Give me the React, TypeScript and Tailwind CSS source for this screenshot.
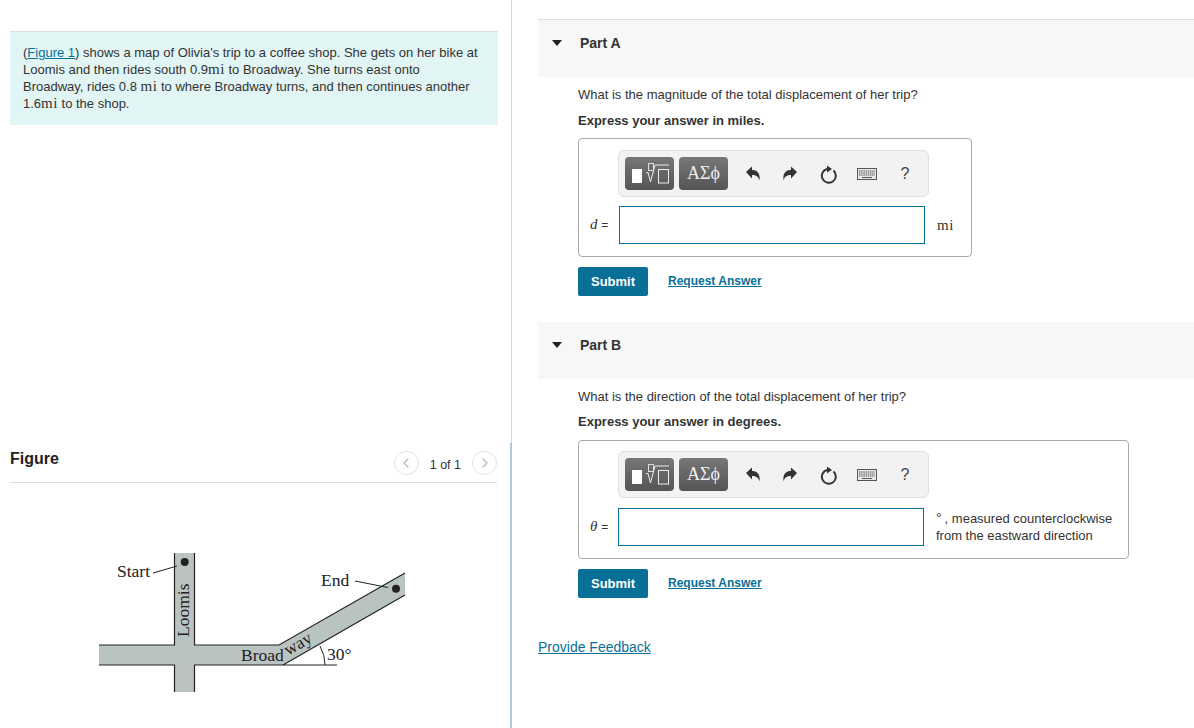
import React from "react";
import { ChevronLeft, ChevronRight } from "lucide-react";

const Mi = ({ children = "mi" }: { children?: React.ReactNode }) => (
  <span className="font-['Liberation_Serif',serif] text-[15px] tracking-[0.5px]">{children}</span>
);

const Templates = () => (
  <svg width="49" height="33" viewBox="0 0 49 33">
    <rect x="7" y="12" width="10" height="14" fill="#fff" />
    <rect x="23.500" y="6.500" width="5" height="7" fill="none" stroke="#ddd" />
    <path d="M21 16l2-.7 2.500 9.700 4.500-17h14" fill="none" stroke="#eee" strokeWidth="1" />
    <rect x="33.500" y="12.500" width="10" height="13.500" fill="none" stroke="#eee" />
  </svg>
);

const Keyboard = () => (
  <svg width="20" height="12" viewBox="0 0 20 12">
    <rect x="0.5" y="0.5" width="19" height="11" fill="#e8e8e8" stroke="#555" />
    <path d="M2 3h16M2 5h16" stroke="#555" strokeWidth="1" strokeDasharray="1.5 .7" />
    <path d="M2 7h16" stroke="#555" strokeWidth="1" strokeDasharray="1.5 .7" />
    <path d="M5 9.500h10" stroke="#555" strokeWidth="1" />
  </svg>
);

const Undo = ({ flip }: { flip?: boolean }) => (
  <svg width="14" height="15" viewBox="0 0 14 15" className={flip ? "-scale-x-100" : ""}>
    <path d="M0 6L6 .5V4C11 4 14.500 7 13.500 14.500C12.500 10.500 10 9 6 9V12.500Z" fill="#333" />
  </svg>
);

const Reset = () => (
  <svg width="18" height="20" viewBox="0 0 18 20">
    <path d="M13.500 6.500A7 7 0 1 1 7 5" fill="none" stroke="#333" strokeWidth="2" />
    <path d="M7 1.500L12 5L7 8.500z" fill="#333" />
  </svg>
);

const Toolbar = () => (
  <div className="flex h-[47px] w-[311px] items-center rounded-[6px] border border-[#e0e0e0] bg-[#f2f2f2] pl-[6px]">
    <div className="flex h-[33px] w-[49px] items-center justify-center rounded-[4px] bg-gradient-to-b from-[#777] to-[#555]">
      <Templates />
    </div>
    <div className="ml-[5px] flex h-[33px] w-[49px] items-center justify-center rounded-[4px] bg-gradient-to-b from-[#777] to-[#555] font-['Liberation_Serif',serif] text-[18px] text-[#eee]">
      ΑΣϕ
    </div>
    <div className="ml-[17px] flex w-[16px] justify-center"><Undo /></div>
    <div className="ml-[21px] flex w-[16px] justify-center"><Undo flip /></div>
    <div className="ml-[22px] flex w-[18px] justify-center"><Reset /></div>
    <div className="ml-[19px] flex w-[20px] justify-center"><Keyboard /></div>
    <div className="ml-[20px] w-[16px] text-center text-[16px] text-[#444]">?</div>
  </div>
);

const PartHeader = ({ label, border }: { label: string; border?: boolean }) => (
  <div className={`flex items-start bg-[#f7f7f7] pl-[14px] pt-[15px] ${border ? "h-[58px] border-t border-[#ddd]" : "h-[57px]"}`}>
    <div className="mt-[5px] h-0 w-0 border-x-[5px] border-t-[6px] border-x-transparent border-t-[#222]" />
    <div className="ml-[18px] text-[14px] font-bold leading-[17px] text-[#333]">{label}</div>
  </div>
);

const Actions = () => (
  <div className="flex items-center">
    <button className="h-[29px] w-[70px] rounded-[2px] bg-[#087096] text-[13px] font-bold text-white">Submit</button>
    <a className="ml-[20px] text-[12px] font-bold text-[#087099] underline">Request Answer</a>
  </div>
);

const Figure = () => (
  <svg width="340" height="160" viewBox="90 545 340 160" className="block">
    <path d="M99 645H174.500V553H194.500V645H279L405 573V595L283 665H194.500V692H174.500V665H99Z" fill="#b9c4c2" stroke="none" />
    <g fill="none" stroke="#222" strokeWidth="1.200">
      <path d="M99 645H174.500V553M194.500 553V645H279L405 573" />
      <path d="M99 665H174.500V692M194.500 692V665H337M283 665L405 595" />
      <path d="M153 573L177 566M355 581L388 587.500" strokeWidth="1" />
      <path d="M320 646Q325 655 325 665" strokeWidth="1" />
    </g>
    <circle cx="184.700" cy="562" r="4" fill="#222" />
    <circle cx="396" cy="588.700" r="4" fill="#222" />
    <g fontFamily="'Liberation Serif', serif" fontSize="17.500" fill="#222">
      <text x="117" y="577">Start</text>
      <text x="321" y="586">End</text>
      <text x="241" y="661">Broad</text>
      <text x="327" y="660">30°</text>
      <text transform="translate(288 656) rotate(-30)">way</text>
      <text transform="translate(189 637) rotate(-90)">Loomis</text>
    </g>
  </svg>
);

export default function App() {
  return (
    <div className="flex h-[728px] w-[1194px] overflow-hidden bg-white font-['Liberation_Sans',sans-serif] text-[13px] leading-[17px] text-[#333]">
      {/* LEFT */}
      <div className="flex w-[512px] shrink-0 flex-col">
        <div className="h-[443px] border-r border-[#d5d5d5] pl-[10px] pr-[13px] pt-[31px]">
          <div className="h-[94px] border-t border-[#ddd] bg-[#e1f5f4] pl-[13px] pr-[18px] pt-[12px]">
            (<a className="text-[#087099] underline">Figure 1</a>) shows a map of Olivia's trip to a coffee shop. She gets on her bike at Loomis and then rides south 0.9<Mi /> to Broadway. She turns east onto Broadway, rides 0.8 <Mi /> to where Broadway turns, and then continues another 1.6<Mi /> to the shop.
          </div>
        </div>
        <div className="flex-1 border-r-2 border-[#b3c7dd] pl-[10px] pr-[13px]">
          <div className="flex h-[40px] items-center justify-between border-b border-[#ddd]">
            <div className="mb-[8px] text-[16px] font-bold text-[#222]">Figure</div>
            <div className="flex items-center">
              <div className="flex h-[24px] w-[25px] items-center justify-center rounded-full border border-[#e2e2e2] text-[#bbb]"><ChevronLeft size={16} /></div>
              <div className="mx-[11px] mt-[5px] text-[12.500px]">1 of 1</div>
              <div className="flex h-[24px] w-[25px] items-center justify-center rounded-full border border-[#e2e2e2] text-[#bbb]"><ChevronRight size={16} /></div>
            </div>
          </div>
          <div className="pl-[80px] pt-[62px]"><Figure /></div>
        </div>
      </div>

      {/* RIGHT */}
      <div className="flex-1 pl-[26px] pt-[19px]">
        <PartHeader label="Part A" border />
        <div className="pl-[40px]">
          <div className="pt-[9px]">What is the magnitude of the total displacement of her trip?</div>
          <div className="pt-[9px] font-bold">Express your answer in miles.</div>
          <div className="mt-[9px] h-[119px] w-[394px] rounded-[4px] border border-[#aaa] pt-[11px]">
            <div className="ml-[39px]"><Toolbar /></div>
            <div className="mt-[9px] flex items-center">
              <div className="w-[40px] whitespace-pre pl-[11px] font-['Liberation_Serif',serif] text-[15px]"><i>d</i> <span className="font-['Liberation_Sans',sans-serif] text-[12px]">=</span></div>
              <div className="h-[38px] w-[306px] border border-[#087099] bg-white" />
              <div className="ml-[12px]"><Mi /></div>
            </div>
          </div>
          <div className="mt-[10px]"><Actions /></div>
        </div>

        <div className="mt-[26px]"><PartHeader label="Part B" /></div>
        <div className="pl-[40px]">
          <div className="pt-[9px]">What is the direction of the total displacement of her trip?</div>
          <div className="pt-[8px] font-bold">Express your answer in degrees.</div>
          <div className="mt-[10px] h-[119px] w-[551px] rounded-[4px] border border-[#aaa] pt-[10px]">
            <div className="ml-[39px]"><Toolbar /></div>
            <div className="mt-[10px] flex items-center">
              <div className="w-[39px] whitespace-pre pl-[11px] font-['Liberation_Serif',serif] text-[15px]"><i>θ</i> <span className="font-['Liberation_Sans',sans-serif] text-[12px]">=</span></div>
              <div className="h-[38px] w-[306px] border border-[#087099] bg-white" />
              <div className="ml-[12px] w-[190px]"><span className="text-[14px] leading-none">°</span><span className="ml-[3px]">, measured counterclockwise from the eastward direction</span></div>
            </div>
          </div>
          <div className="mt-[10px]"><Actions /></div>
        </div>
        <a className="mt-[41px] block text-[14px] text-[#087099] underline">Provide Feedback</a>
      </div>
    </div>
  );
}
